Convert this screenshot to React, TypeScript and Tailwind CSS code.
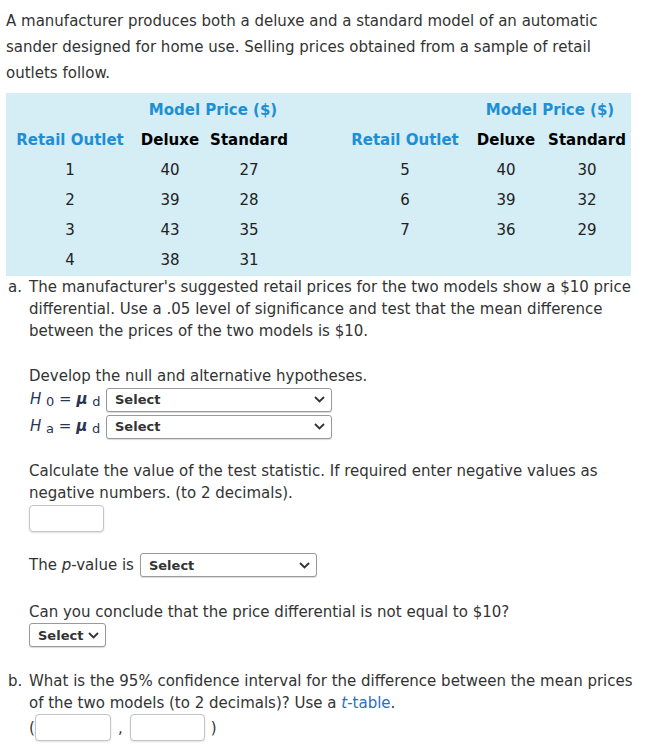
import React from "react";

const sans = { fontFamily: '"DejaVu Sans", Verdana, sans-serif' };

function Chevron() {
  return (
    <svg width="11" height="7" viewBox="0 0 11 7" className="shrink-0">
      <path d="M1 1l4.5 4.5L10 1" fill="none" stroke="#333" strokeWidth="1.8" />
    </svg>
  );
}

function SelectBox({ width }: { width: string }) {
  return (
    <div
      className={`flex h-[24px] ${width} shrink-0 items-center justify-between rounded-[3px] border border-[#9a9a9a] bg-white pl-[8px] pr-[6px] text-[13px] font-bold leading-none text-[#333] shadow-[0_1px_1px_rgba(0,0,0,0.15)]`}
    >
      <span>Select</span>
      <Chevron />
    </div>
  );
}

function InputBox({ width }: { width: string }) {
  return <div className={`h-[27px] ${width} shrink-0 rounded-[4px] border border-[#c4c4c4] bg-white shadow-[0_1px_2px_rgba(0,0,0,0.12)]`} />;
}

type Row = [string, string, string];

function PriceTable({ rows, cols }: { rows: Row[]; cols: string }) {
  return (
    <div className={`grid ${cols} auto-rows-[30px] items-center text-center text-[15px]`}>
      <div />
      <div className="col-span-2 font-bold text-[#1d8fd4]">Model Price ($)</div>
      <div className="font-bold text-[#1d8fd4]">Retail Outlet</div>
      <div className="font-bold text-black">Deluxe</div>
      <div className="font-bold text-black">Standard</div>
      {rows.map(([o, d, s]) => (
        <React.Fragment key={o}>
          <div className="text-[#222]">{o}</div>
          <div className="text-[#222]">{d}</div>
          <div className="text-[#222]">{s}</div>
        </React.Fragment>
      ))}
    </div>
  );
}

function Hypothesis({ sub }: { sub: string }) {
  return (
    <div className="flex items-center">
      <span className="w-[77px] shrink-0 pl-[1px] text-[15px] leading-[24px] text-[#2b3452]">
        <i>H</i> <span className="relative top-[2px] text-[13px]">{sub}</span> = <b><i>μ</i></b>{" "}
        <span className="relative top-[2px] text-[13px]">d</span>
      </span>
      <SelectBox width="w-[226px]" />
    </div>
  );
}

export default function App() {
  const left: Row[] = [
    ["1", "40", "27"],
    ["2", "39", "28"],
    ["3", "43", "35"],
    ["4", "38", "31"],
  ];
  const right: Row[] = [
    ["5", "40", "30"],
    ["6", "39", "32"],
    ["7", "36", "29"],
  ];

  return (
    <div className="h-[756px] w-[648px] bg-white text-[15px] text-[#333]" style={sans}>
      <p className="pl-[6px] pr-[30px] pt-[8px] leading-[26px]">
        A manufacturer produces both a deluxe and a standard model of an automatic sander designed for home use. Selling prices obtained from a sample of retail outlets follow.
      </p>

      <div className="ml-[6px] mt-[7px] flex w-[625px] items-start gap-[49px] bg-[#d5edf5] pb-px pt-[2px]">
        <PriceTable rows={left} cols="grid-cols-[128px_72px_86px]" />
        <PriceTable rows={right} cols="grid-cols-[128px_74px_88px]" />
      </div>

      <div className="flex pl-[8px] leading-[22px]">
        <span className="w-[21px] shrink-0">a.</span>
        <div className="pr-[8px]">
          <p>
            The manufacturer's suggested retail prices for the two models show a $10 price differential. Use a .05 level of significance and test that the mean difference between the prices of the two models is $10.
          </p>

          <p className="mt-[23px]">Develop the null and alternative hypotheses.</p>
          <Hypothesis sub="0" />
          <div className="mt-[2px]">
            <Hypothesis sub="a" />
          </div>

          <p className="mt-[21px]">
            Calculate the value of the test statistic. If required enter negative values as negative numbers. (to 2 decimals).
          </p>
          <div className="mt-px">
            <InputBox width="w-[75px]" />
          </div>

          <div className="mt-[21px] flex items-center gap-[6px]">
            <span>
              The <i>p</i>-value is
            </span>
            <SelectBox width="w-[177px]" />
          </div>

          <p className="mt-[24px]">Can you conclude that the price differential is not equal to $10?</p>
          <SelectBox width="w-[77px]" />
        </div>
      </div>

      <div className="mt-[23px] flex pl-[8px] leading-[22px]">
        <span className="w-[21px] shrink-0">b.</span>
        <div className="pr-[6px]">
          <p>
            What is the 95% confidence interval for the difference between the mean prices of the two models (to 2 decimals)? Use a{" "}
            <span className="text-[#2a6fbe]">
              <i>t</i>-table
            </span>
            .
          </p>
          <div className="flex items-center">
            <span className="w-[6px]">(</span>
            <InputBox width="w-[76px]" />
            <span className="mx-[7px]">,</span>
            <InputBox width="w-[75px]" />
            <span className="ml-[6px]">)</span>
          </div>
        </div>
      </div>
    </div>
  );
}
